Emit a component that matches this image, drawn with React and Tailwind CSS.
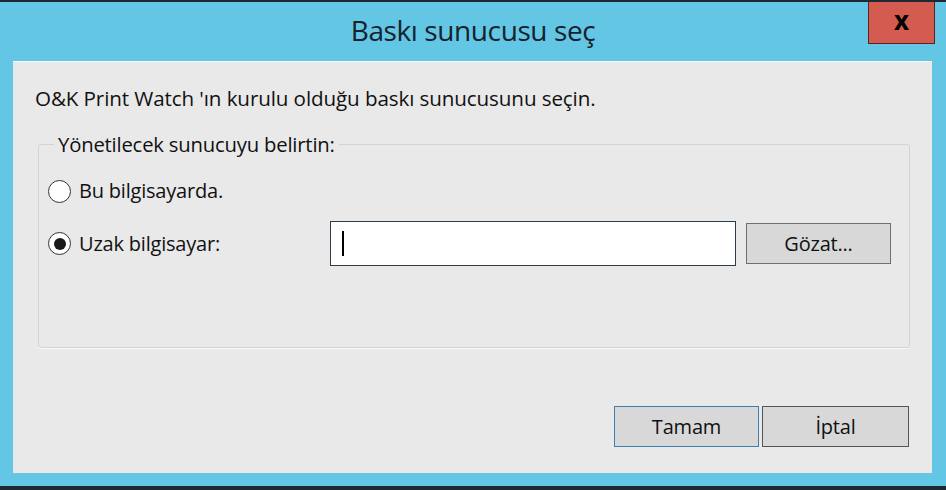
export default function App() {
  const font = { fontFamily: '"Open Sans", "Noto Sans", sans-serif' };

  return (
    <div
      className="w-[946px] h-[490px] bg-[#63c6e4] border-t-[2px] border-b-[4px] border-[#1d2a33] flex flex-col overflow-hidden text-[#111]"
      style={font}>
      <div className="relative h-[59px] flex items-center justify-center shrink-0">
        <div className="text-[28px] tracking-[-0.4px] text-[#16222c] -mt-[4px]">
          Baskı sunucusu seç
        </div>
        <div className="absolute right-[11px] top-[-2px] w-[67px] h-[44px] bg-[#d35b50] border border-[#5a2320] flex items-center justify-center">
          <span className="text-[26px] font-bold text-black leading-none -mt-[5px]">x</span>
        </div>
      </div>

      <div className="ml-[13px] mr-[14px] h-[412px] bg-[#e9e9e9] border-t border-[#f7f7f7] flex flex-col px-[22px] pt-[23px]">
        <div className="text-[20.6px] tracking-[-0.1px] leading-[26px]">
          O&amp;K Print Watch 'ın kurulu olduğu baskı sunucusunu seçin.
        </div>

        <fieldset className="mt-[22px] ml-[3px] h-[215px] border border-[#d3d3d3] rounded-[3px] pl-[9px] pr-[10px] shadow-[0_1px_0_#fafafa]">
          <legend className="ml-[6px] px-[4px] text-[20.3px] tracking-[-0.2px] leading-[22px]">
            Yönetilecek sunucuyu belirtin:
          </legend>

          <div className="flex items-center gap-[8px] mt-[22px] h-[28px]">
            <span className="w-[23px] h-[23px] rounded-full border border-[#333] bg-white shrink-0" />
            <span className="text-[20px] tracking-[-0.2px]">Bu bilgisayarda.</span>
          </div>

          <div className="flex items-center mt-[16px] h-[45px]">
            <div className="flex items-center gap-[8px] w-[282px] shrink-0">
              <span className="w-[23px] h-[23px] rounded-full border border-[#333] bg-white flex items-center justify-center shrink-0">
                <span className="w-[12px] h-[12px] rounded-full bg-[#1a1a1a]" />
              </span>
              <span className="text-[20px] tracking-[-0.2px]">Uzak bilgisayar:</span>
            </div>
            <div className="w-[406px] h-[45px] bg-white border-[1.5px] border-[#2c3b48] flex items-center pl-[11px] shrink-0">
              <span className="w-[2px] h-[25px] bg-black" />
            </div>
            <button className="ml-[10px] w-[145px] h-[41px] bg-[#d8d8d8] border border-[#6f6f6f] text-[20px] tracking-[-0.2px]">
              Gözat...
            </button>
          </div>
        </fieldset>

        <div className="flex justify-end gap-[3px] mt-[58px] pr-[1px]">
          <button className="w-[145px] h-[41px] bg-[#d8d8d8] border-[1.5px] border-[#3d7fae] text-[20px] tracking-[-0.2px]">
            Tamam
          </button>
          <button className="w-[147px] h-[41px] bg-[#d8d8d8] border border-[#555] text-[20px] tracking-[-0.2px]">
            İptal
          </button>
        </div>
      </div>
    </div>
  );
}
